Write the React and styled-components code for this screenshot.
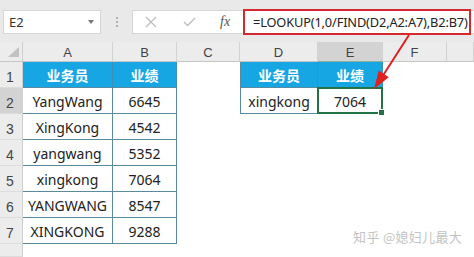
import React from "react";
import styled, { createGlobalStyle, css } from "styled-components";

const Global = createGlobalStyle`
  html, body { margin: 0; padding: 0; background: #ffffff; }
  body { width: 474px; height: 257px; overflow: hidden; font-family: "Noto Sans", "Noto Sans CJK SC", sans-serif; }
`;

const Page = styled.div`
  position: relative;
  width: 474px;
  height: 257px;
  display: flex;
  flex-direction: column;
  overflow: hidden;
`;

const FormulaBar = styled.div`
  height: 42px;
  flex: none;
  box-sizing: border-box;
  background: #e9e9e9;
  padding: 10px 0 0 3px;
  display: flex;
  align-items: flex-start;
`;

const NameBox = styled.div`
  width: 98px;
  height: 24px;
  box-sizing: border-box;
  background: #fff;
  border: 1px solid #d6d6d6;
  display: flex;
  align-items: center;
  justify-content: space-between;
  padding: 0 6px 0 5px;
  font-size: 13px;
  color: #333;
`;

const Caret = styled.span`
  width: 0;
  height: 0;
  border-left: 3px solid transparent;
  border-right: 3px solid transparent;
  border-top: 4px solid #777;
`;

const Grip = styled.div`
  width: 31px;
  height: 24px;
  display: flex;
  flex-direction: column;
  align-items: center;
  justify-content: center;
  gap: 2px;
  & > i { width: 2px; height: 2px; background: #b0b0b0; display: block; }
`;

const FxArea = styled.div`
  flex: 1;
  height: 24px;
  background: #fff;
  border: 1px solid #d6d6d6;
  border-right: none;
  box-sizing: border-box;
  display: flex;
  align-items: center;
`;

const FxIcons = styled.div`
  width: 108px;
  flex: none;
  display: flex;
  align-items: center;
  padding-left: 12px;
  box-sizing: border-box;
  gap: 22px;
`;

const FxText = styled.span`
  font-family: "Liberation Serif", serif;
  font-style: italic;
  font-size: 14px;
  color: #555;
  margin-left: 2px;
`;

const Highlight = styled.div`
  margin-left: 2px;
  height: 26px;
  width: 228px;
  box-sizing: border-box;
  border: 2px solid #d42a2f;
  display: flex;
  align-items: center;
  padding-left: 8px;
  font-size: 12.8px;
  color: #222;
  white-space: nowrap;
  letter-spacing: -0.15px;
`;

const Sheet = styled.div`
  flex: 1;
  display: grid;
  grid-template-columns: 23px 90px 64px 63px 78px 65px 64px 1fr;
  grid-template-rows: 20px repeat(7, 26px) 1fr;
`;

const Corner = styled.div`
  background: #ececec;
  border-right: 1px solid #cfcfcf;
  border-bottom: 1px solid #c6c6c6;
  box-sizing: border-box;
  display: flex;
  align-items: flex-end;
  justify-content: flex-end;
  padding: 0 3px 4px 0;
  &::after {
    content: "";
    width: 0;
    height: 0;
    border-left: 11px solid transparent;
    border-bottom: 10px solid #c2c2c2;
  }
`;

const ColHead = styled.div`
  background: ${(p) => (p.$sel ? "#d3d3d3" : "#ececec")};
  border-right: 1px solid #d2d2d2;
  border-bottom: 1px solid ${(p) => (p.$sel ? "#8fae9a" : "#c6c6c6")};
  box-sizing: border-box;
  display: flex;
  align-items: center;
  justify-content: center;
  font-family: "Liberation Sans", sans-serif;
  font-size: 13px;
  color: #444;
  padding-top: 1px;
`;

const RowHead = styled.div`
  background: ${(p) => (p.$sel ? "#d3d3d3" : "#ececec")};
  border-right: 1px solid #cfcfcf;
  border-bottom: 1px solid #dcdcdc;
  box-sizing: border-box;
  display: flex;
  align-items: flex-end;
  justify-content: center;
  padding: 0 2px 2px 0;
  font-family: "Liberation Sans", sans-serif;
  font-size: 14px;
  color: #444;
`;

const tableBorder = "#5a8aa0";

const Cell = styled.div`
  position: relative;
  box-sizing: border-box;
  display: flex;
  align-items: center;
  justify-content: center;
  padding-top: 1px;
  font-size: 14px;
  color: #222;
  background: #fff;
  ${(p) =>
    p.$boxed &&
    css`
      border-right: 1px solid ${tableBorder};
      border-bottom: 1px solid ${tableBorder};
    `}
  ${(p) => p.$first && css`border-left: 1px solid ${tableBorder};`}
  ${(p) =>
    p.$head &&
    css`
      background: #16a6e4;
      color: #fff;
      font-family: "Noto Sans CJK SC", sans-serif;
      font-weight: 700;
      border-right-color: #3d8fb4;
    `}
  ${(p) =>
    p.$active &&
    css`
      &::after {
        content: "";
        position: absolute;
        inset: -1px -1px -1px -1px;
        border: 2px solid #217346;
      }
      &::before {
        content: "";
        position: absolute;
        right: -3px;
        bottom: -3px;
        width: 5px;
        height: 5px;
        background: #217346;
        border: 1px solid #fff;
        z-index: 1;
      }
    `}
`;

const Watermark = styled.div`
  position: absolute;
  right: 12px;
  bottom: 11px;
  font-family: "Noto Sans CJK SC", sans-serif;
  font-size: 13px;
  color: #c3c3c3;
  letter-spacing: 0.3px;
`;

const ArrowSvg = styled.svg`
  position: absolute;
  left: 0;
  top: 0;
  pointer-events: none;
`;

const cols = ["A", "B", "C", "D", "E", "F", "G"];
const left = [
  ["业务员", "业绩"],
  ["YangWang", "6645"],
  ["XingKong", "4542"],
  ["yangwang", "5352"],
  ["xingkong", "7064"],
  ["YANGWANG", "8547"],
  ["XINGKONG", "9288"],
];
const right = [
  ["业务员", "业绩"],
  ["xingkong", "7064"],
];

export default function App() {
  const cells = [];
  for (let r = 0; r < 8; r++) {
    cells.push(
      <RowHead key={`rh${r}`} $sel={r === 1}>
        {r < 7 ? r + 1 : ""}
      </RowHead>
    );
    for (let c = 0; c < 7; c++) {
      const key = `c${r}-${c}`;
      if (r < 7 && c < 2) {
        cells.push(
          <Cell key={key} $boxed $head={r === 0}>
            {left[r][c]}
          </Cell>
        );
      } else if (r < 2 && (c === 3 || c === 4)) {
        cells.push(
          <Cell key={key} $boxed $first={c === 3} $head={r === 0} $active={r === 1 && c === 4}>
            {right[r][c - 3]}
          </Cell>
        );
      } else {
        cells.push(<Cell key={key} />);
      }
    }
  }

  return (
    <Page>
      <Global />
      <FormulaBar>
        <NameBox>
          E2
          <Caret />
        </NameBox>
        <Grip>
          <i />
          <i />
          <i />
        </Grip>
        <FxArea>
          <FxIcons>
            <svg width="12" height="12" viewBox="0 0 12 12">
              <path d="M1 1L11 11M11 1L1 11" stroke="#bdbdbd" strokeWidth="1.3" fill="none" />
            </svg>
            <svg width="13" height="10" viewBox="0 0 13 10" style={{ marginLeft: 4 }}>
              <path d="M1 5L4.5 8.5L12 1" stroke="#bdbdbd" strokeWidth="1.3" fill="none" />
            </svg>
            <FxText>fx</FxText>
          </FxIcons>
          <Highlight>=LOOKUP(1,0/FIND(D2,A2:A7),B2:B7)</Highlight>
        </FxArea>
      </FormulaBar>
      <Sheet>
        <Corner />
        {cols.map((c) => (
          <ColHead key={c} $sel={c === "E"}>
            {c === "G" ? "" : c}
          </ColHead>
        ))}
        {cells}
      </Sheet>
      <ArrowSvg width="474" height="257" viewBox="0 0 474 257">
        <line x1="409" y1="35" x2="382" y2="77" stroke="#e0201f" strokeWidth="2" />
        <polygon points="374,89 388.8,77.2 378.8,70.6" fill="#e0201f" />
      </ArrowSvg>
      <Watermark>知乎 @媳妇儿最大</Watermark>
    </Page>
  );
}
